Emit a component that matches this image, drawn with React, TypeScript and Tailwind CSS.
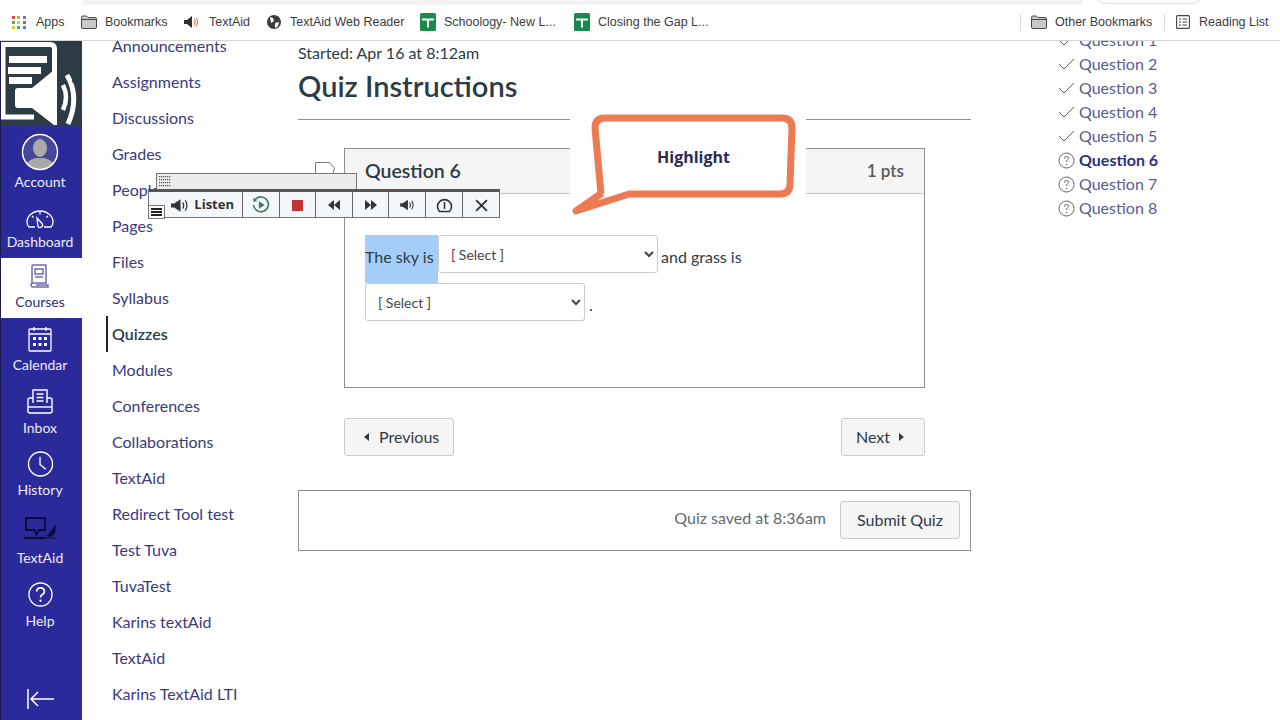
import type { ReactNode } from "react";

const courseNav = [
  "Announcements", "Assignments", "Discussions", "Grades", "People", "Pages", "Files", "Syllabus", "Quizzes",
  "Modules", "Conferences", "Collaborations", "TextAid", "Redirect Tool test", "Test Tuva", "TuvaTest",
  "Karins textAid", "TextAid", "Karins TextAid LTI",
];

function Folder() {
  return (
    <svg width="16" height="14" viewBox="0 0 16 14" fill="#c9c9c9" stroke="#4a4a4a" strokeWidth="1">
      <path d="M.5 2.5q0-1.500 1.500-1.500h3.500l1.500 1.500h7q1.500 0 1.500 1.500v8q0 1.500-1.500 1.500h-12q-1.500 0-1.500-1.500z" />
      <path d="M.5 4.500h15" fill="none" />
    </svg>
  );
}

function GreenCross() {
  return (
    <svg width="16" height="18" viewBox="0 0 16 18">
      <rect width="16" height="18" rx="1.500" fill="#1a8a4c" />
      <path d="M2 6.500h12M8 6.500v8" stroke="#fff" strokeWidth="2" />
    </svg>
  );
}

function AppsGrid() {
  const colors = ["#d9503f", "#e9a23b", "#4a86d8", "#5aa85a", "#e9c53b", "#d9503f", "#e9c53b", "#5aa85a", "#4a86d8"];
  return (
    <div className="grid grid-cols-3 gap-[2px] w-[14px] shrink-0">
      {colors.map((c, i) => (
        <span key={i} className="w-[3px] h-[3px]" style={{ backgroundColor: c }} />
      ))}
    </div>
  );
}

function BookmarkBar() {
  return (
    <header className="relative z-10 h-[41px] shrink-0 bg-white border-b border-[#d4d4d4] flex items-center pt-[4px] pl-[12px] text-[12.5px] text-[#3c3c3c] font-['Liberation_Sans',sans-serif]">
      <div className="absolute top-0 left-[82px] w-[1000px] h-[5px] bg-[#f3f3f3]" />
      <div className="absolute -top-[20px] left-[1094px] w-[110px] h-[24px] rounded-full border border-[#dedede] bg-white" />
      <AppsGrid />
      <span className="ml-[10px] w-[29px]">Apps</span>
      <span className="ml-[16px]"><Folder /></span>
      <span className="ml-[8px] w-[64px]">Bookmarks</span>
      <svg className="ml-[15px]" width="15" height="14" viewBox="0 0 15 14">
        <path d="M0 5h3l5-4v12l-5-4H0z" fill="#2f2f2f" />
        <path d="M10 4q2 3 0 6M12 2.500q3 4.500 0 9" fill="none" stroke="#d9803f" strokeWidth="1.200" />
      </svg>
      <span className="ml-[10px] w-[41px]">TextAid</span>
      <svg className="ml-[17px]" width="14" height="14" viewBox="0 0 14 14">
        <circle cx="7" cy="7" r="7" fill="#3d3d3d" />
        <path d="M3 2l3 1 1 3-3 2zM8 8l4-1-1 4-3 2z" fill="#fff" />
      </svg>
      <span className="ml-[9px] w-[114px] whitespace-nowrap">TextAid Web Reader</span>
      <span className="ml-[16px]"><GreenCross /></span>
      <span className="ml-[8px] w-[114px] whitespace-nowrap">Schoology- New L...</span>
      <span className="ml-[16px]"><GreenCross /></span>
      <span className="ml-[8px] w-[110px] whitespace-nowrap">Closing the Gap L...</span>
      <span className="ml-[312px] w-px h-[17px] bg-[#d8d8d8]" />
      <span className="ml-[10px]"><Folder /></span>
      <span className="ml-[8px] w-[98px] whitespace-nowrap">Other Bookmarks</span>
      <span className="ml-[11px] w-px h-[17px] bg-[#d8d8d8]" />
      <svg className="ml-[11px]" width="14" height="14" viewBox="0 0 14 14" fill="none" stroke="#444" strokeWidth="1.100">
        <rect x=".6" y=".6" width="12.800" height="12.800" rx="1" />
        <path d="M3 4h2M3 7h2M3 10h2M6.500 4h4.500M6.500 7h4.500M6.500 10h4.500" />
      </svg>
      <span className="ml-[9px] whitespace-nowrap">Reading List</span>
    </header>
  );
}

function Logo() {
  return (
    <div className="h-[84px] bg-[#2d3b45] shrink-0 -ml-px">
      <svg width="82" height="84" viewBox="0 0 82 84" fill="none">
        <path d="M0 3.500H50q4.500 0 4.500 4.500V36M3 3V76H34" stroke="#fff" strokeWidth="5" />
        <path d="M9 15h38v7H9zM8 26h33v7H8zM9 36h23v7H9z" fill="#fff" />
        <path d="M15 50q0-3 3-3h14L54 29h3v55h-3L32 67H18q-3 0-3-3z" fill="#fff" />
        <path d="M63 44q6 12 0 25" stroke="#fff" strokeWidth="4.500" />
        <path d="M67 34q13 22 1 49" stroke="#fff" strokeWidth="5" />
        <path d="M72 40l8 2" stroke="#2d3b45" strokeWidth="2" />
      </svg>
    </div>
  );
}

function SideItem({ label, h, icon, active, pb = "pb-[6px]" }: { label: string; h: string; icon: ReactNode; active?: boolean; pb?: string }) {
  return (
    <div className={`${h} ${pb} shrink-0 pr-[3px] flex flex-col items-center justify-end text-[14px] leading-[18px] ${active ? "bg-white text-[#2d2d7a]" : "text-[#ecebf8]"}`}>
      {icon}
      <span>{label}</span>
    </div>
  );
}

function Sidebar() {
  return (
    <aside className="w-[82px] shrink-0 flex flex-col bg-[#2b2a9b] border-l border-[#1b1b4f] overflow-hidden">
      <Logo />
      <SideItem
        label="Account"
        h="h-[71px]"
        pb="pb-[5px]"
        icon={
          <svg className="mb-[2px]" width="38" height="38" viewBox="0 0 38 38">
            <defs>
              <clipPath id="avatarClip"><circle cx="19" cy="19" r="17" /></clipPath>
            </defs>
            <circle cx="19" cy="19" r="17" fill="#45479a" />
            <g clipPath="url(#avatarClip)" fill="#a9a9a9">
              <ellipse cx="19" cy="15" rx="7" ry="9" />
              <path d="M3 36q2-9 12-11h8q10 2 12 11z" />
            </g>
            <circle cx="19" cy="19" r="17.500" fill="none" stroke="#fff" strokeWidth="1.500" />
          </svg>
        }
      />
      <SideItem
        label="Dashboard"
        h="h-[62px]"
        pb="pb-[7px]"
        icon={
          <svg className="mb-[4px]" width="28" height="19" viewBox="0 0 28 19" fill="none" stroke="#fff" strokeWidth="1.300">
            <path d="M9 17H3q-2-2-2-5a13 11 0 0 1 26 0q0 3-2 5h-7" />
            <path d="M14 2v2.500M6 6l1.500 1.500M22 6l-1.500 1.500" />
            <path d="M11 8l5 5.500a2.500 2.500 0 0 1-4 3z" />
          </svg>
        }
      />
      <SideItem
        label="Courses"
        h="h-[60px]"
        pb="pb-[7px]"
        active
        icon={
          <svg className="mb-[5px]" width="20" height="24" viewBox="0 0 20 24" fill="none" stroke="#6f6fa8" strokeWidth="1.500">
            <path d="M2 19V2q0-1 1-1h13v18H3q-2 0-2 2t2 2h15v-2H6" />
            <rect x="5" y="5" width="8" height="5" />
            <path d="M5 13h8" />
          </svg>
        }
      />
      <SideItem
        label="Calendar"
        h="h-[62px]"
        icon={
          <svg className="mb-[4px]" width="24" height="26" viewBox="0 0 24 26" fill="none" stroke="#fff" strokeWidth="1.300">
            <rect x="1" y="3" width="22" height="22" rx="1" />
            <path d="M1 8h22M6 1v4M18 1v4" />
            <path d="M5 11h3v3H5zM10.500 11h3v3h-3zM16 11h3v3h-3zM5 17h3v3H5zM10.500 17h3v3h-3zM16 17h3v3h-3z" fill="#fff" stroke="none" />
          </svg>
        }
      />
      <SideItem
        label="Inbox"
        h="h-[63px]"
        icon={
          <svg className="mb-[5px]" width="26" height="25" viewBox="0 0 26 25" fill="none" stroke="#fff" strokeWidth="1.400">
            <path d="M6 14V1h14v13" />
            <path d="M9.500 5h7M9.500 8.500h7M9.500 12h7" />
            <path d="M6 9H3q-2 0-2 2v11q0 2 2 2h20q2 0 2-2V11q0-2-2-2h-3" />
            <path d="M1 18h24" />
          </svg>
        }
      />
      <SideItem
        label="History"
        h="h-[62px]"
        icon={
          <svg className="mb-[4px]" width="27" height="26" viewBox="0 0 27 27" fill="none" stroke="#fff" strokeWidth="1.400">
            <circle cx="13.500" cy="13.500" r="12.500" />
            <path d="M13 6v8l6 5" />
          </svg>
        }
      />
      <SideItem
        label="TextAid"
        h="h-[68px]"
        icon={
          <svg className="mb-[9px]" width="33" height="23" viewBox="0 0 33 23" fill="none" stroke="#0c0c3c" strokeWidth="1.800">
            <path d="M2 1h19v12h-6l-2.500 5-2-5H2z" />
            <path d="M0 21h21" strokeWidth="2.200" />
            <path d="M23 19l9-12-1 10-5 3z" fill="#0c0c3c" stroke="none" />
            <path d="M21 21h11" strokeWidth="1" />
          </svg>
        }
      />
      <SideItem
        label="Help"
        h="h-[63px]"
        icon={
          <svg className="mb-[5px]" width="25" height="25" viewBox="0 0 26 26" fill="none" stroke="#fff" strokeWidth="1.400">
            <circle cx="13" cy="13" r="12" />
            <path d="M9 10q0-4 4-4t4 4q0 2-2 3t-2 3" strokeWidth="1.800" />
            <circle cx="13" cy="19.500" r="1.200" fill="#fff" stroke="none" />
          </svg>
        }
      />
      <div className="mt-[53px] pr-[3px] flex justify-center">
        <svg width="27" height="20" viewBox="0 0 27 20" fill="none" stroke="#fff" strokeWidth="1.500">
          <path d="M1 0v20M27 10H4M11 3l-7 7 7 7" />
        </svg>
      </div>
    </aside>
  );
}

function CourseNav() {
  return (
    <nav className="w-[216px] shrink-0 -mt-[13px] pl-[24px] text-[16px] text-[#3b3a7d]">
      {courseNav.map((item, i) =>
        item === "Quizzes" ? (
          <div key={i} className="h-[36px] flex items-center pl-[4px] border-l-2 border-[#1f1f2e] font-semibold text-[#2d3b45]">
            {item}
          </div>
        ) : (
          <div key={i} className="h-[36px] flex items-center pl-[6px]">
            {item}
          </div>
        ),
      )}
    </nav>
  );
}

function QuizButton({ children, className = "" }: { children: ReactNode; className?: string }) {
  return (
    <button className={`h-[38px] flex items-center bg-[#f5f5f5] border border-[#c7cdd1] rounded-[3px] text-[16px] text-[#2d3b45] ${className}`}>
      {children}
    </button>
  );
}

function QuizSelect({ w }: { w: string }) {
  return (
    <select className={`${w} h-[38px] bg-white border border-[#c7cdd1] rounded-[3px] pl-[8px] text-[14px] text-[#444]`}>
      <option>[ Select ]</option>
    </select>
  );
}

function Main() {
  return (
    <main className="w-[673px] shrink-0 text-[#2d3b45]">
      <p className="mt-[2px] text-[16px] leading-[19px]">Started: Apr 16 at 8:12am</p>
      <h1 className="mt-[6px] text-[29px] leading-[36px] font-semibold border-b border-[#8f8f8f] pb-[15px]">Quiz Instructions</h1>
      <section className="mt-[28px] ml-[46px] w-[581px] h-[240px] border border-[#8f8f8f]">
        <div className="h-[45px] bg-[#f5f5f5] border-b border-[#c4c4c4] flex items-center justify-between pl-[20px] pr-[20px]">
          <span className="text-[19.5px] font-semibold">Question 6</span>
          <span className="text-[17px] font-semibold text-[#5a5a5a]">1 pts</span>
        </div>
        <div className="pl-[20px] pt-[41px] text-[16px] text-[#2d3b45]">
          <div className="flex items-start h-[48px]">
            <span className="h-[48px] w-[73px] bg-[#a6cdf8] pt-[10px] whitespace-nowrap">The sky is</span>
            <QuizSelect w="w-[220px]" />
            <span className="ml-[3px] pt-[10px]">and grass is</span>
          </div>
          <div className="flex items-start">
            <QuizSelect w="w-[220px]" />
            <span className="ml-[4px] pt-[10px]">.</span>
          </div>
        </div>
      </section>
      <div className="mt-[30px] ml-[46px] w-[581px] flex justify-between">
        <QuizButton className="pl-[19px] pr-[14px] gap-[10px]">
          <span className="w-0 h-0 border-y-[4px] border-y-transparent border-r-[5px] border-r-[#2d3b45]" />
          Previous
        </QuizButton>
        <QuizButton className="pl-[14px] pr-[20px] gap-[9px]">
          Next
          <span className="w-0 h-0 border-y-[4px] border-y-transparent border-l-[5px] border-l-[#2d3b45]" />
        </QuizButton>
      </div>
      <div className="mt-[34px] h-[61px] border border-[#8f8f8f] flex items-center justify-end pr-[10px] pb-[2px]">
        <span className="text-[16px] text-[#5f6a72] mr-[14px] -mt-[3px]">Quiz saved at 8:36am</span>
        <QuizButton className="w-[120px] justify-center">Submit Quiz</QuizButton>
      </div>
    </main>
  );
}

function QuestionList() {
  const rows = [1, 2, 3, 4, 5, 6, 7, 8];
  return (
    <ul className="ml-[87px] -mt-[13px] text-[16px] text-[#5b5b92]">
      {rows.map((n) => (
        <li key={n} className={`h-[24px] flex items-center gap-[4px] ${n === 6 ? "font-bold text-[#2f2e7c]" : ""}`}>
          {n <= 5 ? (
            <svg width="17" height="12" viewBox="0 0 17 12" fill="none" stroke="#666" strokeWidth="1">
              <path d="M1 6l5 5L16 1" />
            </svg>
          ) : (
            <svg width="17" height="17" viewBox="0 0 17 17" fill="none" stroke="#666" strokeWidth="1">
              <circle cx="8.500" cy="8.500" r="7.500" />
              <path d="M6.500 6.500q0-2 2-2t2 2q0 1-1 1.500t-1 2" />
              <circle cx="8.500" cy="12.500" r=".7" fill="#666" stroke="none" />
            </svg>
          )}
          Question {n}
        </li>
      ))}
    </ul>
  );
}

function ToolCell({ children, w = "w-[37px]" }: { children: ReactNode; w?: string }) {
  return <div className={`${w} h-full pt-px flex items-center justify-center border-r border-[#666]`}>{children}</div>;
}

function SpeakerIcon({ size = 18 }: { size?: number }) {
  return (
    <svg width={size} height={size - 3} viewBox="0 0 17 14" fill="none">
      <path d="M0 5h3l6-4v12l-6-4H0z" fill="#333" />
      <path d="M11 4q2 3 0 6M13.500 2q3 5 0 10" stroke="#333" strokeWidth="1.200" />
    </svg>
  );
}

function GripDots() {
  const dots = Array.from({ length: 24 }, (_, i) => i);
  return (
    <svg width="12" height="11" viewBox="0 0 12 11" fill="#555">
      {dots.map((i) => (
        <rect key={i} x={(i % 6) * 2} y={Math.floor(i / 6) * 3} width="1.200" height="1.200" />
      ))}
    </svg>
  );
}

// floating read-aloud toolbar, sits over the page
function ReadToolbar() {
  return (
    <div className="absolute left-[148px] top-[173px] w-[352px]">
      <div className="ml-[8px] w-[201px] h-[16px] bg-[#ececec] border border-b-0 border-[#777] flex items-center pl-[2px]">
        <GripDots />
      </div>
      <div className="relative h-[29px] bg-[#f4f7f9] border-t-[3px] border-t-[#555] border-b border-l border-[#777] flex text-[13px] font-bold text-[#333]">
        <div className="w-[94px] h-full pt-px flex items-center justify-end gap-[5px] pr-[8px] border-r border-[#666]">
          <SpeakerIcon />
          <span className="font-['Open_Sans',sans-serif]">Listen</span>
        </div>
        <ToolCell>
          <svg width="18" height="18" viewBox="0 0 17 17" fill="none">
            <path d="M3 3.500A7 7 0 1 1 1.500 8.500" stroke="#3f7a5e" strokeWidth="1.500" />
            <path d="M1 1.500l.5 4 3.500-.5z" fill="#3f7a5e" />
            <path d="M6.500 5l5.500 3.500-5.500 3.500z" fill="#3f7a5e" />
          </svg>
        </ToolCell>
        <ToolCell w="w-[36px]">
          <span className="w-[11px] h-[11px] bg-[#c0333a]" />
        </ToolCell>
        <ToolCell>
          <svg width="12" height="10" viewBox="0 0 12 10" fill="#333"><path d="M6 0v10L0 5zM12 0v10L6 5z" /></svg>
        </ToolCell>
        <ToolCell w="w-[36px]">
          <svg width="12" height="10" viewBox="0 0 12 10" fill="#333"><path d="M0 0v10l6-5zM6 0v10l6-5z" /></svg>
        </ToolCell>
        <ToolCell>
          <SpeakerIcon size={15} />
        </ToolCell>
        <ToolCell>
          <svg width="17" height="16" viewBox="0 0 17 16" fill="none" stroke="#333" strokeWidth="1.600">
            <path d="M3.500 14.500a7 7 0 1 1 10 0z" />
            <path d="M8.500 5v7" />
          </svg>
        </ToolCell>
        <ToolCell>
          <svg width="13" height="13" viewBox="0 0 12 12" fill="none" stroke="#333" strokeWidth="1.700"><path d="M1 1l10 10M11 1L1 11" /></svg>
        </ToolCell>
        <div className="absolute -left-px top-[13px] w-[17px] h-[14px] bg-white border border-[#777] flex flex-col items-center justify-center gap-[1px]">
          <span className="w-[11px] h-[2px] bg-[#222]" />
          <span className="w-[11px] h-[2px] bg-[#222]" />
          <span className="w-[11px] h-[2px] bg-[#222]" />
        </div>
      </div>
    </div>
  );
}

// orange speech bubble annotation drawn over the page
function Callout() {
  return (
    <div className="absolute left-[570px] top-[100px] w-[236px] h-[122px] bg-white flex justify-center pt-[46px] pl-[11px]">
      <svg className="absolute inset-0" width="236" height="122" viewBox="0 0 236 122" fill="none">
        <path
          d="M31 94L25 28Q25 18 35 18H212Q222 18 222 28L220 84Q220 94 210 94H59L6 111L32 93"
          stroke="#ec7a52"
          strokeWidth="7"
          strokeLinejoin="round"
        />
      </svg>
      <span className="relative h-fit font-['Open_Sans',sans-serif] text-[16px] leading-[22px] font-bold text-[#2b2b55]">Highlight</span>
    </div>
  );
}

export default function App() {
  return (
    <div className="relative w-[1280px] h-[720px] overflow-hidden bg-white flex flex-col font-['Lato',sans-serif]">
      <BookmarkBar />
      <div className="flex flex-1 min-h-0 overflow-hidden">
        <Sidebar />
        <CourseNav />
        <Main />
        <QuestionList />
      </div>
      <svg className="absolute left-[315px] top-[162px]" width="20" height="14" viewBox="0 0 20 14" fill="white" stroke="#777">
        <path d="M.5 13V.5h14L19.500 6l-2 7" />
      </svg>
      <Callout />
      <ReadToolbar />
    </div>
  );
}
